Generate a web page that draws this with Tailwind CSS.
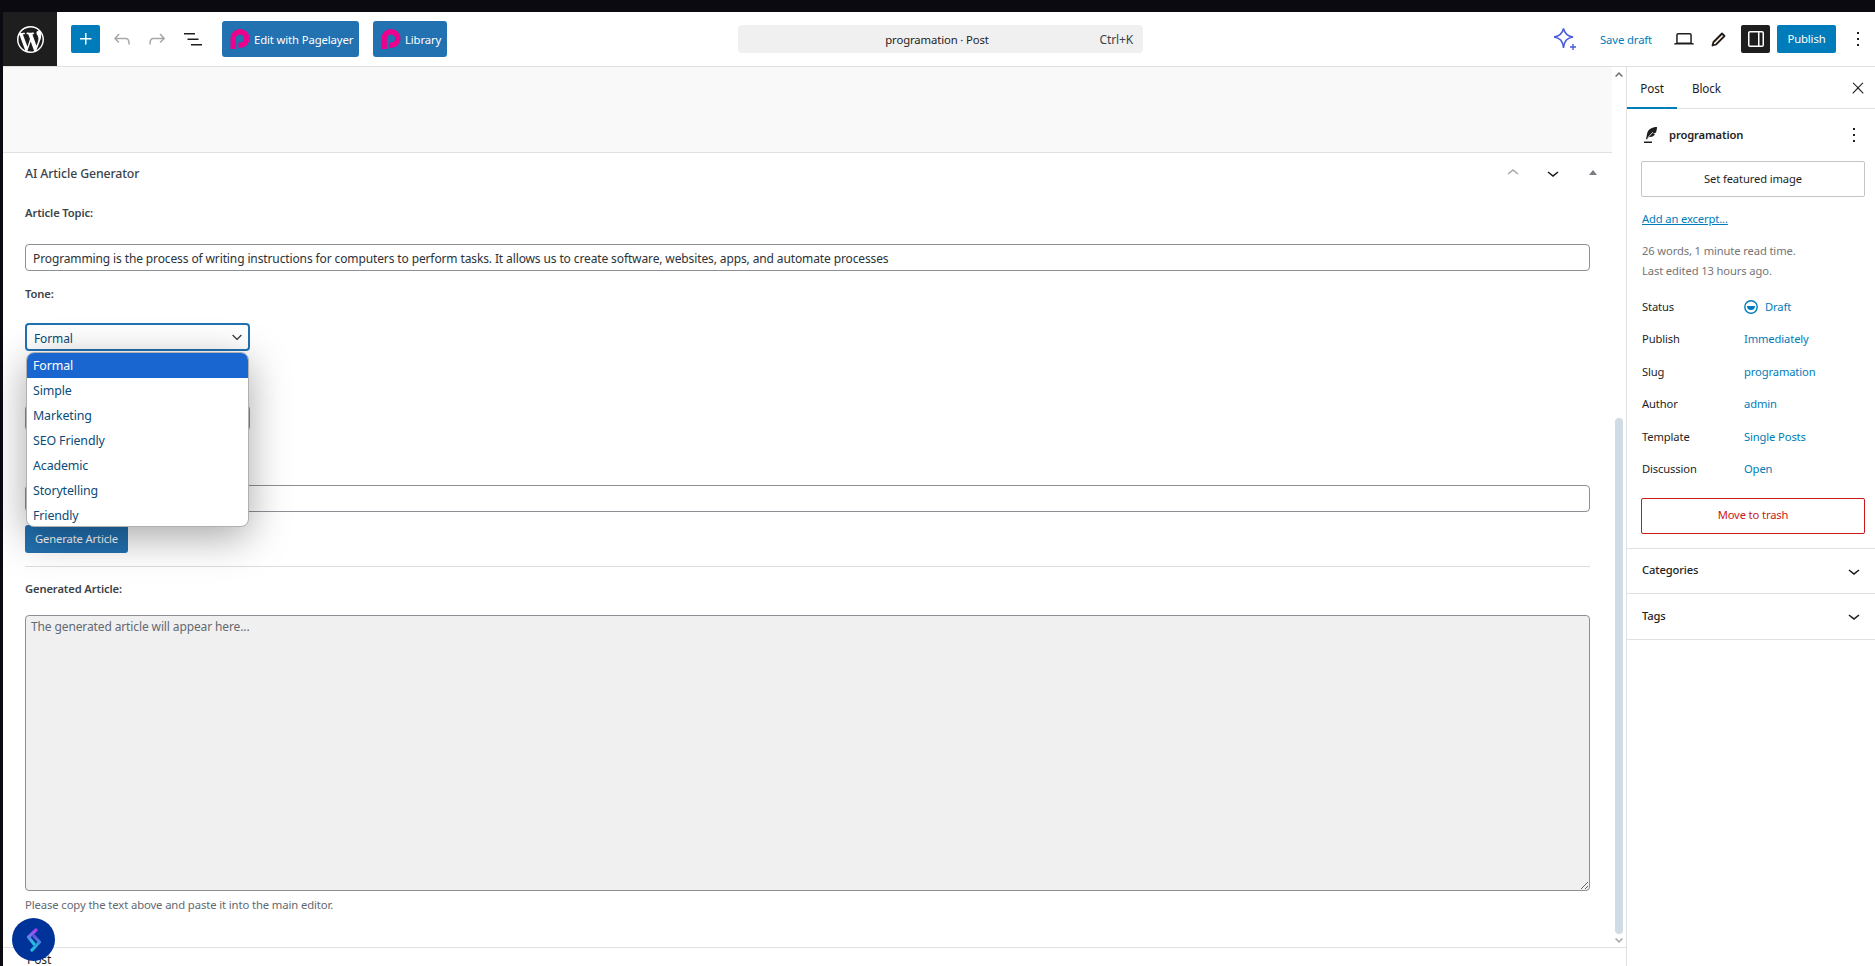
<!DOCTYPE html>
<html lang="en">
<head>
  <meta charset="UTF-8" />
  <title>programation - Post</title>
  <script src="https://cdn.jsdelivr.net/npm/@tailwindcss/browser@4"></script>
</head>
<body class="bg-white text-[#1e1e1e] antialiased overflow-hidden font-['Noto_Sans',sans-serif] text-[12px] tracking-[-0.12px]">
<div class="relative flex flex-col w-[1875px] h-[966px] overflow-hidden">

  <!-- Top strip -->
  <div class="h-3 shrink-0 bg-[#0a0a10]"></div>

  <div class="flex flex-1 min-h-0">
    <div class="w-[3px] shrink-0 bg-[#0a0a10]"></div>

    <div class="flex flex-col flex-1 min-w-0">
      <!-- Header -->
      <header class="flex items-center h-[55px] shrink-0 border-b border-[#e0e0e0] bg-white text-[11.3px]">
        <div class="flex items-center justify-center w-[54px] h-[54px] shrink-0 bg-[#1e1e1e]">
          <svg class="w-[27px] h-[27px] fill-white" viewBox="0 0 20 20"><path d="M20 10c0-5.51-4.49-10-10-10C4.48 0 0 4.49 0 10c0 5.52 4.48 10 10 10 5.51 0 10-4.48 10-10zM7.78 15.37L4.37 6.22c.55-.02 1.17-.08 1.17-.08.5-.06.44-1.13-.06-1.11 0 0-1.45.11-2.37.11-.18 0-.37 0-.58-.01C4.12 2.69 6.87 1.11 10 1.11c2.33 0 4.45.87 6.05 2.34-.68-.11-1.65.39-1.65 1.58 0 .74.45 1.36.9 2.1.35.61.55 1.36.55 2.46 0 1.49-1.4 5-1.4 5l-3.03-8.37c.54-.02.82-.17.82-.17.5-.05.44-1.25-.06-1.22 0 0-1.44.12-2.38.12-.87 0-2.33-.12-2.33-.12-.5-.03-.56 1.2-.06 1.22l.92.08 1.26 3.41zM17.41 10c.24-.64.74-1.87.43-4.25.7 1.29 1.05 2.71 1.05 4.25 0 3.29-1.73 6.24-4.4 7.78.97-2.59 1.94-5.2 2.92-7.78zM6.1 18.09C3.12 16.65 1.11 13.53 1.11 10c0-1.3.23-2.48.72-3.59C3.25 10.3 4.67 14.2 6.1 18.09zm4.03-6.63l2.58 6.98c-.86.29-1.76.45-2.71.45-.79 0-1.57-.11-2.29-.33.81-2.38 1.62-4.74 2.42-7.1z"/></svg>
        </div>
        <button class="flex items-center justify-center w-[29px] h-[28px] ml-[14px] shrink-0 rounded-[2px] bg-[#007cba]">
          <svg class="w-6 h-6 fill-white" viewBox="0 0 24 24"><path d="M11 12.5V17.5H12.5V12.5H17.5V11H12.5V6H11V11H6V12.5H11Z"/></svg>
        </button>
        <svg class="w-6 h-6 ml-[10px] shrink-0 fill-[#a7a7a7]" viewBox="0 0 24 24"><path d="M18.3 11.7c-.6-.6-1.4-.9-2.3-.9H6.7l2.9-3.3-1.1-1-4.5 5L8.5 16l1-1-2.7-2.7H16c.5 0 .9.2 1.3.5 1 1 1 3.4 1 4.5v.3h1.5v-.2c0-1.5 0-4.3-1.5-5.7z"/></svg>
        <svg class="w-6 h-6 ml-[11px] shrink-0 fill-[#a7a7a7]" viewBox="0 0 24 24"><path d="M15.6 6.5l-1.1 1 2.9 3.3H8c-.9 0-1.7.3-2.3.9-1.4 1.5-1.4 4.2-1.4 5.6v.2h1.5v-.3c0-1.1 0-3.5 1-4.5.3-.3.7-.5 1.3-.5h9.2L14.5 15l1.1 1.1 4.6-4.6-4.6-5z"/></svg>
        <svg class="w-6 h-6 ml-[12px] shrink-0 fill-[#1e1e1e]" viewBox="0 0 24 24"><path d="M3 6h11v1.5H3V6zm3.5 5.5h11V13h-11v-1.5zM21 17H10v1.5h11V17z"/></svg>
        <a class="flex items-center w-[137px] h-[36px] ml-[17px] pl-[8px] shrink-0 rounded-[3px] bg-[#2271b1] text-white">
          <svg class="w-5 h-5 shrink-0" viewBox="0 0 20 20" fill="none" stroke="#ec008c" stroke-width="5.4"><path d="M3.2 20V9.5a6.8 6.8 0 1 1 6.8 6.8h-1.5"/></svg>
          <span class="ml-[4px] pt-[2px] whitespace-nowrap">Edit with Pagelayer</span>
        </a>
        <a class="flex items-center w-[74px] h-[36px] ml-[14px] pl-[8px] shrink-0 rounded-[3px] bg-[#2271b1] text-white">
          <svg class="w-5 h-5 shrink-0" viewBox="0 0 20 20" fill="none" stroke="#ec008c" stroke-width="5.4"><path d="M3.2 20V9.5a6.8 6.8 0 1 1 6.8 6.8h-1.5"/></svg>
          <span class="ml-[4px] pt-[2px]">Library</span>
        </a>
        <div class="relative flex items-center justify-center w-[405px] h-[28px] ml-[291px] pr-[7px] shrink-0 rounded-[4px] bg-[#f0f0f0] text-[#1e1e1e]">
          <span class="pt-[2px]">programation · Post</span>
          <span class="absolute right-[10px] top-[6px] text-[#3c434a] text-[12px]">Ctrl+K</span>
        </div>
        <svg class="w-[26px] h-[26px] ml-[409px] shrink-0" viewBox="0 0 26 26" fill="none" stroke="#4a5bdc" stroke-width="1.5"><path d="M11.5 2.5c1 5 3.5 7.5 9.5 8.5-6 1-8.5 3.5-9.5 11-1-7.5-3.5-10-9.5-11 6-1 8.5-3.5 9.5-8.5z"/><path d="M21 18v6M18 21h6" stroke-width="1.4"/></svg>
        <span class="w-[51px] ml-[22px] pt-[2px] shrink-0 text-[#007cba] whitespace-nowrap">Save draft</span>
        <svg class="w-6 h-6 ml-[21px] shrink-0 fill-[#1e1e1e]" viewBox="0 0 24 24"><path d="M20.5 16h-.7V8c0-1.1-.9-2-2-2H6.2c-1.1 0-2 .9-2 2v8h-.7c-.8 0-1.5.7-1.5 1.5h20c0-.8-.7-1.5-1.5-1.5zM5.7 8c0-.3.2-.5.5-.5h11.6c.3 0 .5.2.5.5v7.6H5.7V8z"/></svg>
        <svg class="w-[15px] h-[15px] ml-[15px] mr-[5px] shrink-0" viewBox="0 0 15 15" fill="none"><path d="M11 1.5 13.5 4 5 12.5l-3.5 1 1-3.500z" stroke="#1e1e1e" stroke-width="1.8" stroke-linejoin="round"/><path d="M3.5 10.5 11 3" stroke="#a06a30" stroke-width="0.8"/></svg>
        <button class="flex items-center justify-center w-[29px] h-[28px] ml-[10px] shrink-0 rounded-[2px] bg-[#1e1e1e]">
          <svg class="w-6 h-6 fill-white" viewBox="0 0 24 24"><path d="M18 4H6c-1.1 0-2 .9-2 2v12c0 1.1.9 2 2 2h12c1.1 0 2-.9 2-2V6c0-1.1-.9-2-2-2zM6 18.5a.5.5 0 01-.5-.5V6a.5.5 0 01.5-.5h8v13H6zm12.5-.5a.5.5 0 01-.5.5h-2.5v-13H18a.5.5 0 01.5.5v12z"/></svg>
        </button>
        <button class="w-[59px] h-[28px] ml-[7px] pt-[1px] shrink-0 rounded-[2px] bg-[#007cba] text-white">Publish</button>
        <svg class="w-6 h-6 ml-[10px] shrink-0 fill-[#1e1e1e]" viewBox="0 0 24 24"><path d="M13 19h-2v-2h2v2zm0-6h-2v-2h2v2zm0-6h-2V5h2v2z"/></svg>
      </header>

      <div class="flex flex-1 min-h-0">
        <div class="flex flex-col flex-1 min-w-0">
          <div class="flex flex-1 min-h-0 border-b border-[#e0e0e0]">
            <!-- Editor content -->
            <main class="flex-1 min-w-0">
              <div class="h-[86px] bg-[#f9f9f9] border-b border-[#e0e0e0]"></div>
              <div class="flex items-center justify-between h-[40px] pl-[22px] pr-[7px]">
                <h2 class="pt-[2px] text-[#3c434a] font-medium text-[12.3px]">AI Article Generator</h2>
                <div class="flex items-center">
                  <svg class="w-6 h-6 fill-[#a7aaad]" viewBox="0 0 24 24"><path d="M6.5 12.4 12 8l5.5 4.4-.9 1.2L12 10l-4.500 3.600-1-1.200z"/></svg>
                  <svg class="w-6 h-6 ml-[16px] fill-[#1e1e1e]" viewBox="0 0 24 24"><path d="M17.5 11.6 12 16l-5.5-4.4.9-1.2L12 14l4.5-3.6 1 1.2z"/></svg>
                  <svg class="w-6 h-6 ml-[16px] fill-[#787c82]" viewBox="0 0 24 24"><path d="M12 9l4 5H8z"/></svg>
                </div>
              </div>

              <form class="px-[22px] text-[#3c434a]">
                <label class="block mt-[9px] h-[20px] leading-[22px] font-semibold text-[11.2px]">Article Topic:</label>
                <input class="block w-full h-[27px] mt-[22px] px-[7px] pt-[1px] border border-[#8c8f94] rounded-[4px] text-[#2c3338]" value="Programming is the process of writing instructions for computers to perform tasks. It allows us to create software, websites, apps, and automate processes" />
                <label class="block mt-[12px] h-[20px] leading-[21px] font-semibold text-[11.2px]">Tone:</label>

                <div class="relative w-[225px] mt-[20px]">
                  <div class="flex items-center justify-between h-[28px] pl-[7px] pr-[3px] border-2 border-[#2271b1] rounded-[4px] bg-white text-[#0a4b78]">
                    <span class="pt-[3px]">Formal</span>
                    <svg class="w-4 h-4 fill-[#2c3338]" viewBox="0 0 20 20"><path d="M5 7l5 5 5-5 1 1.2-6 6-6-6z"/></svg>
                  </div>
                  <ul class="absolute z-10 left-[1px] top-[29px] w-[223px] h-[175px] overflow-hidden rounded-[8px] border border-[#b0b0b0] bg-white shadow-[0_10px_40px_rgba(0,0,0,0.35)] text-[#0a4b78] text-[12.4px]">
                    <li class="flex items-center h-[25px] pl-[6px] pt-[1px] bg-[#1a66d1] text-white">Formal</li>
                    <li class="flex items-center h-[25px] pl-[6px] pt-[1px]">Simple</li>
                    <li class="flex items-center h-[25px] pl-[6px] pt-[1px]">Marketing</li>
                    <li class="flex items-center h-[25px] pl-[6px] pt-[1px]">SEO Friendly</li>
                    <li class="flex items-center h-[25px] pl-[6px] pt-[1px]">Academic</li>
                    <li class="flex items-center h-[25px] pl-[6px] pt-[1px]">Storytelling</li>
                    <li class="flex items-center h-[25px] pl-[6px] pt-[1px]">Friendly</li>
                  </ul>
                </div>

                <div class="w-[225px] h-[26px] mt-[54px] border border-[#8c8f94] rounded-[4px]"></div>
                <input class="block w-full h-[27px] mt-[54px] border border-[#8c8f94] rounded-[4px]" />
                <button type="button" class="block w-[103px] h-[28px] mt-[13px] rounded-[3px] bg-[#2271b1] text-white text-[11.2px]">Generate Article</button>
                <hr class="mt-[13px] border-[#dcdcde]" />
                <label class="block mt-[12px] h-[20px] leading-[20px] font-semibold text-[11.2px]">Generated Article:</label>
                <textarea readonly placeholder="The generated article will appear here..." class="block w-full h-[276px] mt-[16px] px-[5px] py-[2px] border border-[#8c8f94] rounded-[4px] bg-[#f0f0f0] placeholder:text-[#646970]"></textarea>
                <p class="mt-[6px] text-[#646970] text-[11.3px]">Please copy the text above and paste it into the main editor.</p>
              </form>
            </main>

            <!-- Scrollbar -->
            <div class="flex flex-col items-center w-[14px] shrink-0">
              <svg class="w-[12px] h-[12px] mt-[1px] fill-[#777]" viewBox="0 0 12 12"><path d="M2 8l4-4 4 4-1.2 1L6 6.3 3.2 9z"/></svg>
              <div class="w-[8px] h-[516px] mt-[338px] rounded-[4px] bg-[#cfdbe5]"></div>
              <svg class="w-[12px] h-[12px] mt-[1px] fill-[#aaa]" viewBox="0 0 12 12"><path d="M2 4l4 4 4-4-1.2-1L6 5.7 3.2 3z"/></svg>
            </div>
          </div>
          <div class="h-[18px] shrink-0 pl-[24px] leading-[24px] text-[#1e1e1e]">Post</div>
        </div>

        <!-- Sidebar -->
        <aside class="w-[249px] shrink-0 border-l border-[#e0e0e0] text-[11.2px]">
          <div class="flex items-center h-[42px] border-b border-[#e0e0e0] text-[11.7px]">
            <span class="flex items-center justify-center w-[50px] h-[42px] pt-[5px] border-b-2 border-[#007cba]">Post</span>
            <span class="ml-[15px] pt-[3px]">Block</span>
            <svg class="w-[18px] h-[18px] ml-auto mr-[8px] fill-[#1e1e1e]" viewBox="0 0 24 24"><path d="M13 11.8l6.1-6.3-1-1-6.1 6.2-6.1-6.2-1 1 6.1 6.3-6.5 6.7 1 1 6.5-6.6 6.5 6.6 1-1z"/></svg>
          </div>
          <div class="pl-[15px] pr-[10px]">
            <div class="flex items-center h-[52px]">
              <svg class="w-6 h-6 -ml-[4px] shrink-0" viewBox="0 0 24 24"><path d="M19 4c-5 0-9 2-10 7-.4 2-.5 3-1 5l1 .5c.5-1 1-2 2-2.5 3 .5 5-1 6-3l-2 0 3-1.5C18.5 8 19 6 19 4z" fill="#1e1e1e"/><path d="M6 18.5h8V20H6z" fill="#1e1e1e"/><path d="M10 14.5 15 9" stroke="#fff" stroke-width="0.8"/></svg>
              <span class="ml-[7px] pt-[1px] font-semibold text-[11.2px]">programation</span>
              <svg class="w-6 h-6 ml-auto -mr-[1px] fill-[#1e1e1e]" viewBox="0 0 24 24"><path d="M13 19h-2v-2h2v2zm0-6h-2v-2h2v2zm0-6h-2V5h2v2z"/></svg>
            </div>
            <button class="w-[224px] h-[36px] -ml-[1px] border border-[#c3c4c7] rounded-[2px]">Set featured image</button>
            <a class="block mt-[14px] text-[#007cba] underline">Add an excerpt...</a>
            <p class="mt-[13px] leading-[20px] text-[#757575]">26 words, 1 minute read time.<br />Last edited 13 hours ago.</p>
            <dl class="grid grid-cols-[102px_1fr] auto-rows-[32.5px] items-center mt-[10px] text-[#007cba]">
              <dt class="text-[#1e1e1e]">Status</dt>
              <dd class="flex items-center gap-[7px]">
                <svg class="w-[14px] h-[14px]" viewBox="0 0 14 14" fill="none"><circle cx="7" cy="7" r="6.2" stroke="#007cba" stroke-width="1.4"/><path d="M3 6h8a4 4 0 0 1-8 0z" fill="#007cba"/></svg>
                Draft
              </dd>
              <dt class="text-[#1e1e1e]">Publish</dt><dd>Immediately</dd>
              <dt class="text-[#1e1e1e]">Slug</dt><dd>programation</dd>
              <dt class="text-[#1e1e1e]">Author</dt><dd>admin</dd>
              <dt class="text-[#1e1e1e]">Template</dt><dd>Single Posts</dd>
              <dt class="text-[#1e1e1e]">Discussion</dt><dd>Open</dd>
            </dl>
            <button class="w-[224px] h-[36px] mt-[12px] -ml-[1px] border border-[#cc1818] rounded-[2px] text-[#cc1818]">Move to trash</button>
          </div>
          <div class="flex items-center justify-between h-[46px] mt-[14px] pl-[15px] pr-[9px] border-y border-[#e0e0e0] font-medium">
            Categories
            <svg class="w-6 h-6 fill-[#1e1e1e]" viewBox="0 0 24 24"><path d="M17.5 11.6 12 16l-5.5-4.4.9-1.2L12 14l4.5-3.6 1 1.2z"/></svg>
          </div>
          <div class="flex items-center justify-between h-[46px] pl-[15px] pr-[9px] border-b border-[#e0e0e0] font-medium">
            Tags
            <svg class="w-6 h-6 fill-[#1e1e1e]" viewBox="0 0 24 24"><path d="M17.5 11.6 12 16l-5.5-4.4.9-1.2L12 14l4.5-3.6 1 1.2z"/></svg>
          </div>
        </aside>
      </div>
    </div>
  </div>

  <!-- Floating assistant badge -->
  <div class="absolute left-[12px] top-[918px] flex items-center justify-center w-[43px] h-[43px] rounded-full bg-[#00339a]">
    <svg class="w-[16px] h-[24px]" viewBox="0 0 16 24" fill="none" stroke-width="3.2" stroke-linecap="round" stroke-linejoin="round">
      <defs>
        <linearGradient id="sg" x1="0" y1="0" x2="0" y2="1"><stop offset="0" stop-color="#b03cf0"/><stop offset="1" stop-color="#18c8dc"/></linearGradient>
        <linearGradient id="sg2" x1="0" y1="0" x2="0" y2="1"><stop offset="0" stop-color="#6a50e0"/><stop offset="1" stop-color="#18c8dc"/></linearGradient>
      </defs>
      <path d="M10 2 2.5 9 8 16" stroke="url(#sg)"/>
      <path d="M8 8l5.5 6L6 22" stroke="url(#sg2)"/>
    </svg>
  </div>
</div>
</body>
</html>
